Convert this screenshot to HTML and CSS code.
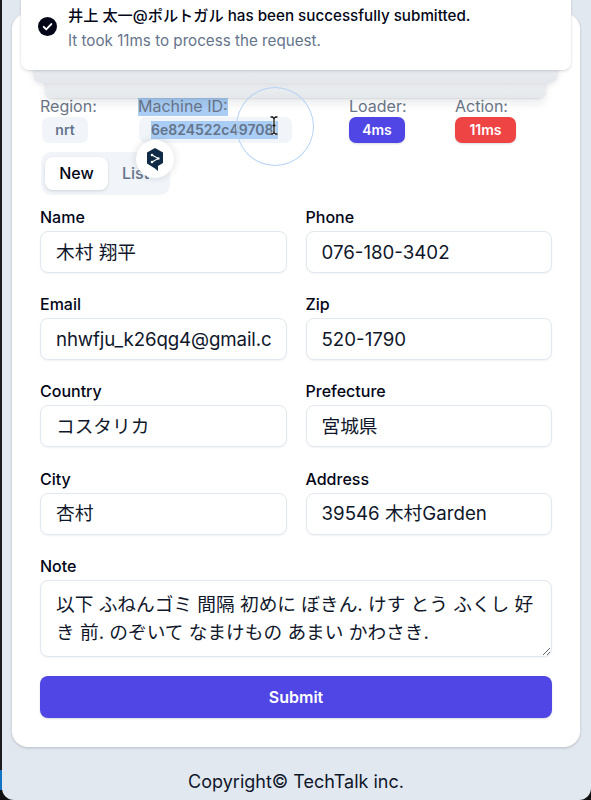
FILE: index.html
```html
<!DOCTYPE html>
<html lang="ja">
<head>
<meta charset="utf-8">
<title>TechTalk</title>
<link rel="stylesheet" href="styles.css">
</head>
<body>
<div class="window">
  <main class="card">
    <section class="stats">
      <div class="stat stat-region">
        <div class="stat-label">Region:</div>
        <div class="badge badge-plain badge-region">nrt</div>
      </div>
      <div class="stat stat-machine">
        <div class="stat-label"><span class="sel">Machine ID:</span></div>
        <div class="badge badge-plain badge-machine"><span class="sel sel-id">6e824522c49708</span></div>
      </div>
      <div class="stat stat-loader">
        <div class="stat-label">Loader:</div>
        <div class="badge badge-indigo">4ms</div>
      </div>
      <div class="stat stat-action">
        <div class="stat-label">Action:</div>
        <div class="badge badge-red">11ms</div>
      </div>
    </section>
    <div class="tabs">
      <div class="tab tab-active">New</div>
      <div class="tab">List</div>
    </div>
    <form class="form">
      <div class="field"><label for="f-name">Name</label><input id="f-name" class="input input-cjk" readonly value="木村 翔平"></div>
      <div class="field"><label for="f-phone">Phone</label><input id="f-phone" class="input" readonly value="076-180-3402"></div>
      <div class="field"><label for="f-email">Email</label><input id="f-email" class="input input-email" readonly value="nhwfju_k26qg4@gmail.com"></div>
      <div class="field"><label for="f-zip">Zip</label><input id="f-zip" class="input" readonly value="520-1790"></div>
      <div class="field"><label for="f-country">Country</label><input id="f-country" class="input input-cjk" readonly value="コスタリカ"></div>
      <div class="field"><label for="f-pref">Prefecture</label><input id="f-pref" class="input input-cjk" readonly value="宮城県"></div>
      <div class="field"><label for="f-city">City</label><input id="f-city" class="input input-cjk" readonly value="杏村"></div>
      <div class="field"><label for="f-address">Address</label><input id="f-address" class="input input-cjk" readonly value="39546 木村Garden"></div>
      <div class="field field-wide"><label for="f-note">Note</label>
        <textarea id="f-note" class="textarea" readonly>以下 ふねんゴミ 間隔 初めに ぼきん. けす とう ふくし 好き 前. のぞいて なまけもの あまい かわさき.</textarea>
      </div>
      <button class="submit field-wide" type="button">Submit</button>
    </form>
  </main>
  <footer class="footer">Copyright© TechTalk inc.</footer>

  <div class="toasts">
    <div class="layer layer-2"></div>
    <div class="layer layer-1"></div>
    <div class="toast">
      <svg class="check" viewBox="0 0 20 20" width="19" height="19" aria-hidden="true"><circle cx="10" cy="10" r="10" fill="#020617"/><path d="M6 10.400l2.700 2.700L14 7.400" fill="none" stroke="#fff" stroke-width="2" stroke-linecap="round" stroke-linejoin="round"/></svg>
      <div class="toast-text">
        <div class="toast-title">井上 太一@ポルトガル has been successfully submitted.</div>
        <div class="toast-sub">It took 11ms to process the request.</div>
      </div>
    </div>
  </div>

  <div class="ring"></div>
  <svg class="ibeam" viewBox="0 0 10 19" width="10" height="19" aria-hidden="true"><path d="M1.500 1h2L5 2.500 6.500 1h2M5 2.500v14M1.500 18h2L5 16.500 6.500 18h2M3.500 9.500h3" fill="none" stroke="#fff" stroke-width="2.600"/><path d="M1.500 1h2L5 2.500 6.500 1h2M5 2.500v14M1.500 18h2L5 16.500 6.500 18h2M3.500 9.500h3" fill="none" stroke="#111" stroke-width="1.300"/></svg>
  <div class="fab">
    <svg viewBox="0 0 16 23" width="16" height="23" aria-hidden="true"><path d="M8 0l8 4.500v10.500l-5 2.900V23l-3-2.400-8-5.100V4.500z" fill="#0f2b46"/><circle cx="5" cy="7" r="1.300" fill="#fff"/><circle cx="5" cy="14" r="1.300" fill="#fff"/><circle cx="11.300" cy="10.500" r="1.300" fill="#fff"/><path d="M5 7l6.300 3.500L5 14" fill="none" stroke="#fff" stroke-width="1.100"/></svg>
  </div>
</div>
</body>
</html>
```
FILE: styles.css
```css
* { box-sizing: border-box; }
html, body {
  margin: 0;
  height: 800px;
  overflow: hidden;
}
body {
  font-family: Inter, "Noto Sans CJK JP", sans-serif;
  color: #020617;
  background: linear-gradient(#1c1c1e 0 770px, #1273c4 770px 790px, #111 790px);
}
.window {
  position: relative;
  margin-left: 2px;
  width: 589px;
  height: 800px;
  background: #e2e8f0;
  border-radius: 0 0 12px 12px;
  overflow: hidden;
  padding: 13px 11px 0 10px;
}
.card {
  background: #fff;
  border-radius: 16px;
  height: 734px;
  padding: 83px 28px 0;
  box-shadow: 0 1px 3px rgba(15, 23, 42, .2);
}
.toasts {
  position: absolute;
  left: 19px;
  top: -10px;
  width: 550px;
  height: 80px;
}
.toast, .layer {
  position: absolute;
  border-radius: 8px;
}
.toast {
  inset: 0;
  display: flex;
  align-items: flex-start;
  gap: 11.500px;
  padding: 14px 16px 0 16.500px;
  background: #fff;
  box-shadow: 0 1px 3px rgba(15, 23, 42, .18);
}
.check { margin-top: 13px; flex: none; }
.layer-1 {
  left: 12px; right: 13px; top: 10px; bottom: -13px;
  background: linear-gradient(#f1f3f6 60%, #e4e7eb);
  box-shadow: 0 1px 6px rgba(15, 23, 42, .1);
}
.layer-2 {
  left: 24px; right: 25px; top: 20px; bottom: -28px;
  background: linear-gradient(#f6f7f9 70%, #e4e7eb);
  box-shadow: 0 1px 2px rgba(15, 23, 42, .1), 0 6px 9px rgba(15, 23, 42, .08);
}
.toast-title { font-size: 15.200px; font-weight: 500; line-height: 24px; white-space: nowrap; }
.toast-sub { font-size: 15.200px; line-height: 24px; margin-top: 1px; color: #64748b; white-space: nowrap; }
.stats { display: flex; height: 56px; }
.stat-label { font-size: 16px; line-height: 20px; color: #6b7688; margin-bottom: 1px; }
.stat-region { width: 98px; }
.stat-machine { width: 211px; }
.stat-loader { width: 106px; }
.badge {
  height: 26px;
  line-height: 26px;
  border-radius: 7px;
  font-size: 14px;
  font-weight: 600;
  text-align: center;
}
.badge-plain { background: #f1f5f9; color: #64748b; }
.badge-region { width: 46px; margin-left: 2px; }
.badge-machine { width: 153px; margin-left: 1px; padding-left: 12px; text-align: left; display: flex; align-items: center; }
.badge-indigo { background: #4f46e5; color: #fff; width: 56px; box-shadow: 0 1px 2px rgba(15, 23, 42, .15); }
.badge-red { background: #ef4444; color: #fff; width: 61px; box-shadow: 0 1px 2px rgba(15, 23, 42, .15); }
.sel { background: #a9cdf5; }
.sel-id {
  display: block;
  width: 127px;
  height: 18px;
  line-height: 18px;
  overflow: hidden;
  white-space: nowrap;
}
.tabs {
  display: flex;
  margin-left: 1px;
  height: 43px;
  width: 129px;
  padding: 5px 4px;
  background: #f1f5f9;
  border-radius: 10px;
  font-size: 16px;
  font-weight: 500;
}
.tab { padding: 0 14px; line-height: 33px; color: #64748b; }
.tab-active {
  width: 63px;
  flex: none;
  text-align: center;
  background: #fff;
  color: #020617;
  border-radius: 8px;
  box-shadow: 0 1px 3px rgba(15, 23, 42, .15);
}
.form {
  display: grid;
  grid-template-columns: 1fr 1fr;
  column-gap: 19px;
  row-gap: 21.200px;
  margin-top: 12px;
}
.field label {
  display: block;
  font-size: 16px;
  font-weight: 500;
  line-height: 20px;
  margin-bottom: 4px;
}
.input, .textarea {
  display: block;
  width: 100%;
  border: 1px solid #e2e8f0;
  border-radius: 8px;
  font-family: inherit;
  font-size: 18.700px;
  color: #0f172a;
  background: #fff;
  outline: none;
  box-shadow: 0 1px 2px rgba(15, 23, 42, .05);
}
.input { height: 42px; padding: 0 15px; }
.input-cjk { padding-bottom: 4px; }
.input-email { letter-spacing: -.12px; }
.textarea {
  height: 77px;
  line-height: 28.500px;
  padding: 10px 15px 6px;
  resize: vertical;
  margin: 0;
}
.field-wide { grid-column: 1 / 3; }
.submit {
  display: block;
  height: 42px;
  border: 0;
  font-family: inherit;
  background: #4f46e5;
  color: #fff;
  border-radius: 8px;
  font-size: 16px;
  font-weight: 600;
  margin-top: -2px;
  box-shadow: 0 1px 2px rgba(15, 23, 42, .15);
}
.footer {
  text-align: center;
  font-size: 18px;
  line-height: 24px;
  margin-top: 23px;
  color: #0f172a;
}
.ring {
  position: absolute;
  left: 234px;
  top: 87px;
  width: 78px;
  height: 79px;
  border: 1px solid #b6d3f5;
  border-radius: 50%;
}
.ibeam { position: absolute; left: 267px; top: 116px; }
.fab {
  position: absolute;
  left: 134px;
  top: 140px;
  width: 38px;
  height: 38px;
  border-radius: 50%;
  background: #fff;
  display: flex;
  align-items: center;
  justify-content: center;
  box-shadow: 0 0 8px rgba(15, 23, 42, .14);
}
```
